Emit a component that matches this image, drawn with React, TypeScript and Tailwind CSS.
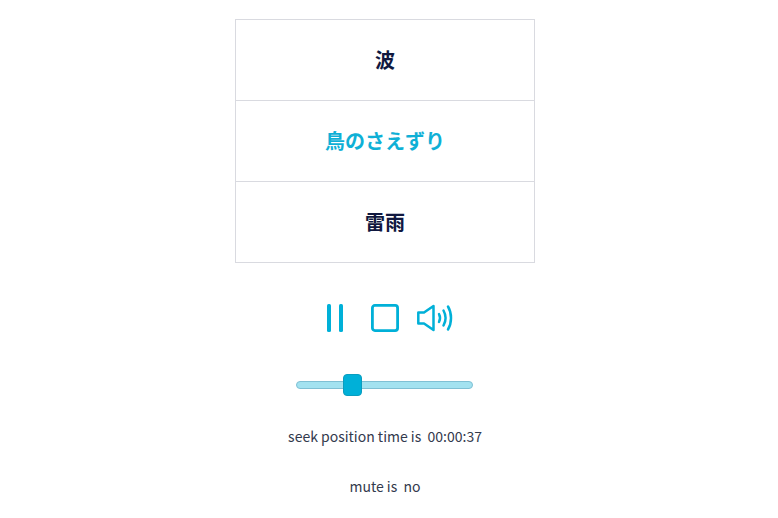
const sounds = [
  { label: '波', active: false },
  { label: '鳥のさえずり', active: true },
  { label: '雷雨', active: false },
];

export default function App() {
  return (
    <div className="w-[770px] h-[518px] overflow-hidden bg-white pt-[19px] flex flex-col items-center font-['Noto_Sans_CJK_JP',sans-serif] text-[#333a4d]">
      <ul className="w-[300px] border border-[#d9dae0]">
        {sounds.map((s, i) => (
          <li
            key={s.label}
            className={`flex items-center justify-center text-xl font-bold ${i > 0 ? 'h-[81px] border-t border-[#d9dae0]' : 'h-[80px]'} ${s.active ? 'text-[#0fb0d6]' : 'text-[#10183f]'}`}
          >
            {s.label}
          </li>
        ))}
      </ul>

      <div className="mt-[40px] ml-[10px] flex items-center h-[30px] text-[#00b0d8]">
        <svg width="16" height="28" viewBox="0 0 16 28" fill="currentColor" className="mr-[28px]">
          <rect x="0" y="0" width="4" height="28" rx="1.5" />
          <rect x="12" y="0" width="4" height="28" rx="1.5" />
        </svg>
        <svg width="28" height="28" viewBox="0 0 28 28" fill="none" stroke="currentColor" strokeWidth="2.8" className="mr-[18px]">
          <rect x="1.4" y="1.4" width="25.2" height="25.2" rx="2.5" />
        </svg>
        <svg width="36" height="28" viewBox="0 0 36 28" fill="none" stroke="currentColor" strokeWidth="2.5" strokeLinecap="round" strokeLinejoin="round">
          <path d="M1.3 8.5H7L16.5 2V26L7 19.5H1.3Z" />
          <path d="M22 10C23.3 12.5 23.3 15.5 22 18" />
          <path d="M26.5 6.5C29 11 29 17 26.5 21.5" />
          <path d="M31 2.5C35 9 35 19 31 25.5" />
        </svg>
      </div>

      <div className="relative mt-[41px] -ml-[2px] w-[177px] h-[22px] flex items-center">
        <div className="w-full h-[8px] rounded-full bg-[#a3e2f0] border border-[#7fc0d4]" />
        <div className="absolute left-[47px] top-0 w-[19px] h-[22px] rounded-[4px] bg-[#00b0d8] border border-[#0a9dbf]" />
      </div>

      <p className="mt-[28px] text-sm leading-[24px] whitespace-pre">seek position time is  00:00:37</p>
      <p className="mt-[26px] text-sm leading-[24px] whitespace-pre">mute is  no</p>
    </div>
  );
}
